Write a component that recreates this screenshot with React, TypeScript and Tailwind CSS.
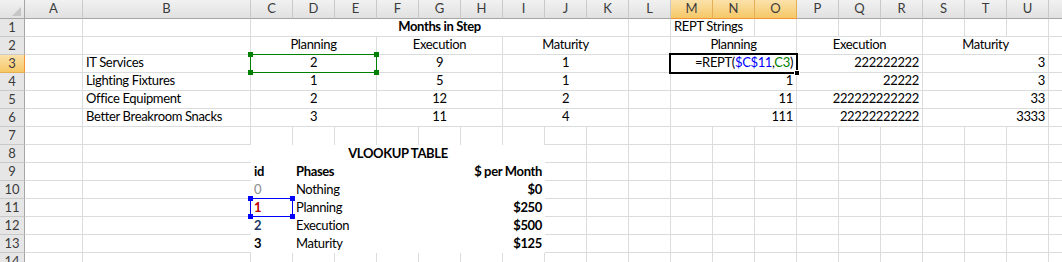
import type { ReactNode } from "react"

const COLS = "ABCDEFGHIJKLMNOPQRSTUV".split("")
const ROWS = Array.from({ length: 14 }, (_, i) => i + 1)

type Align = "left" | "center" | "right"

interface Cell {
  r: number
  c: number
  span?: number
  text: ReactNode
  align?: Align
  cls?: string
}

// column index helper (A = 0)
const ci = (l: string) => COLS.indexOf(l)

const data: [string, number, number, number, string, string, string][] = [
  ["IT Services", 2, 9, 1, "", "222222222", "3"],
  ["Lighting Fixtures", 1, 5, 1, "1", "22222", "3"],
  ["Office Equipment", 2, 12, 2, "11", "222222222222", "33"],
  ["Better Breakroom Snacks", 3, 11, 4, "111", "22222222222", "3333"],
]

const phases: [string, string, string, string][] = [
  ["0", "Nothing", "$0", "text-[#8c8c8c]"],
  ["1", "Planning", "$250", "text-[#c00000] font-bold"],
  ["2", "Execution", "$500", "text-[#1f3864] font-bold"],
  ["3", "Maturity", "$125", "font-bold"],
]

const cells: Cell[] = [
  { r: 1, c: ci("C"), span: 9, text: "Months in Step", align: "center", cls: "font-bold" },
  { r: 1, c: ci("M"), span: 2, text: "REPT Strings" },
  { r: 2, c: ci("C"), span: 3, text: "Planning", align: "center" },
  { r: 2, c: ci("F"), span: 3, text: "Execution", align: "center" },
  { r: 2, c: ci("I"), span: 3, text: "Maturity", align: "center" },
  { r: 2, c: ci("M"), span: 3, text: "Planning", align: "center" },
  { r: 2, c: ci("P"), span: 3, text: "Execution", align: "center" },
  { r: 2, c: ci("S"), span: 3, text: "Maturity", align: "center" },
  ...data.flatMap(([name, p, e, m, rp, re, rm], i) => {
    const r = i + 3
    return [
      { r, c: ci("B"), text: name },
      { r, c: ci("C"), span: 3, text: p, align: "center" as Align },
      { r, c: ci("F"), span: 3, text: e, align: "center" as Align },
      { r, c: ci("I"), span: 3, text: m, align: "center" as Align },
      {
        r,
        c: ci("M"),
        span: 3,
        align: "right" as Align,
        text:
          r === 3 ? (
            <span>
              =REPT(<span className="text-[#0000ff]">$C$11</span>,<span className="text-[#008000]">C3</span>)
            </span>
          ) : (
            rp
          ),
      },
      { r, c: ci("P"), span: 3, text: re, align: "right" as Align },
      { r, c: ci("S"), span: 3, text: rm, align: "right" as Align },
    ]
  }),
  { r: 8, c: ci("C"), span: 7, text: "VLOOKUP TABLE", align: "center", cls: "font-bold" },
  { r: 9, c: ci("C"), text: "id", cls: "font-bold" },
  { r: 9, c: ci("D"), text: "Phases", cls: "font-bold" },
  { r: 9, c: ci("F"), span: 4, text: "$ per Month", align: "right", cls: "font-bold" },
  ...phases.flatMap(([id, name, cost, idCls], i) => [
    { r: i + 10, c: ci("C"), text: id, cls: idCls },
    { r: i + 10, c: ci("D"), text: name },
    { r: i + 10, c: ci("I"), text: cost, align: "right" as Align, cls: "font-bold" },
  ]),
]

// white-filled lookup block hides its gridlines
const inFill = (r: number, c: number) => r >= 8 && r <= 13 && c >= 2 && c <= 8

// reference box drawn over a range, with corner handles
function RefBox({ cls, handle }: { cls: string; handle: string }) {
  return (
    <div className={`pointer-events-none absolute border ${cls}`}>
      <div className={`absolute -left-[3px] -top-[3px] h-[5px] w-[5px] ${handle}`} />
      <div className={`absolute -right-[3px] -top-[3px] h-[5px] w-[5px] ${handle}`} />
      <div className={`absolute -bottom-[3px] -left-[3px] h-[5px] w-[5px] ${handle}`} />
      <div className={`absolute -bottom-[3px] -right-[3px] h-[5px] w-[5px] ${handle}`} />
    </div>
  )
}

export default function App() {
  const body: ReactNode[] = []
  for (const r of ROWS) {
    let c = 0
    while (c < COLS.length) {
      const cell = cells.find((x) => x.r === r && x.c === c)
      const span = cell?.span ?? 1
      const last = c + span - 1
      const noRight = inFill(r, last) || (r >= 8 && r <= 13 && last === 1)
      const noBottom = inFill(r, c) || (r === 7 && c >= 2 && c <= 8)
      const justify =
        cell?.align === "center" ? "justify-center" : cell?.align === "right" ? "justify-end" : "justify-start"
      body.push(
        <div
          key={`${r}-${c}`}
          className={`flex items-end whitespace-nowrap px-[3px] pb-[2px] leading-[15px] ${justify} ${
            noRight ? "" : "border-r border-r-[#dadcdd]"
          } ${noBottom ? "" : "border-b border-b-[#dadcdd]"} ${cell?.cls ?? ""}`}
          style={{ gridRow: r + 1, gridColumn: `${c + 2} / span ${span}` }}
        >
          {cell?.text}
        </div>
      )
      c += span
    }
  }

  return (
    <div className="h-[262px] w-[1062px] overflow-hidden bg-white font-['Lato','Open_Sans',sans-serif] text-[13px] tracking-[-0.35px] text-black">
      <div className="relative grid w-max grid-cols-[25px_58px_168px_repeat(20,42px)] grid-rows-[19px_repeat(14,18px)]">
        {/* corner */}
        <div className="relative border-b border-r border-b-[#a5a5a5] border-r-[#a5a5a5] bg-gradient-to-b from-[#f1f1f1] to-[#e1e1e1]">
          <svg className="absolute bottom-[2px] right-[3px]" width="9" height="9" viewBox="0 0 9 9">
            <polygon points="9,0 9,9 0,9" fill="#c6c6c6" />
          </svg>
        </div>

        {/* column headers (V is off-screen past the right edge) */}
        {COLS.map((l, i) => {
          const sel = i >= 12 && i <= 14
          return (
            <div
              key={l}
              className={`flex items-center justify-center border-b border-r tracking-normal ${
                sel
                  ? "border-b-[#f29436] border-r-[#e4ae54] bg-gradient-to-b from-[#fbe1a9] to-[#f6c866] text-[#3c3c3c]"
                  : "border-b-[#a5a5a5] border-r-[#c9c9c9] bg-gradient-to-b from-[#f1f1f1] to-[#e1e1e1] text-[#3b3b3b]"
              }`}
            >
              {l === "V" ? "" : l}
            </div>
          )
        })}

        {/* row headers */}
        {ROWS.map((r) => (
          <div
            key={r}
            className={`flex items-center justify-center border-b border-r tracking-normal ${
              r === 3
                ? "border-b-[#e4ae54] border-r-[#f29436] bg-gradient-to-b from-[#fbe1a9] to-[#f6c866] text-[#3c3c3c]"
                : "border-b-[#c9c9c9] border-r-[#a5a5a5] bg-[#e6e6e6] text-[#3b3b3b]"
            }`}
            style={{ gridRow: r + 1, gridColumn: 1 }}
          >
            {r}
          </div>
        ))}

        {body}

        {/* formula reference C3 (merged C3:E3) */}
        <RefBox cls="left-[250px] top-[54px] h-[19px] w-[127px] border-[#008000]" handle="bg-[#008000]" />
        {/* formula reference C11 */}
        <RefBox cls="left-[250px] top-[198px] h-[19px] w-[43px] border-[#0000ff]" handle="bg-[#0000ff]" />

        {/* active cell M3 */}
        <div className="pointer-events-none absolute left-[669px] top-[53px] h-[21px] w-[129px] border-2 border-black">
          <div className="absolute -bottom-[4px] -right-[4px] h-[6px] w-[6px] border border-white bg-black" />
        </div>
      </div>
    </div>
  )
}
